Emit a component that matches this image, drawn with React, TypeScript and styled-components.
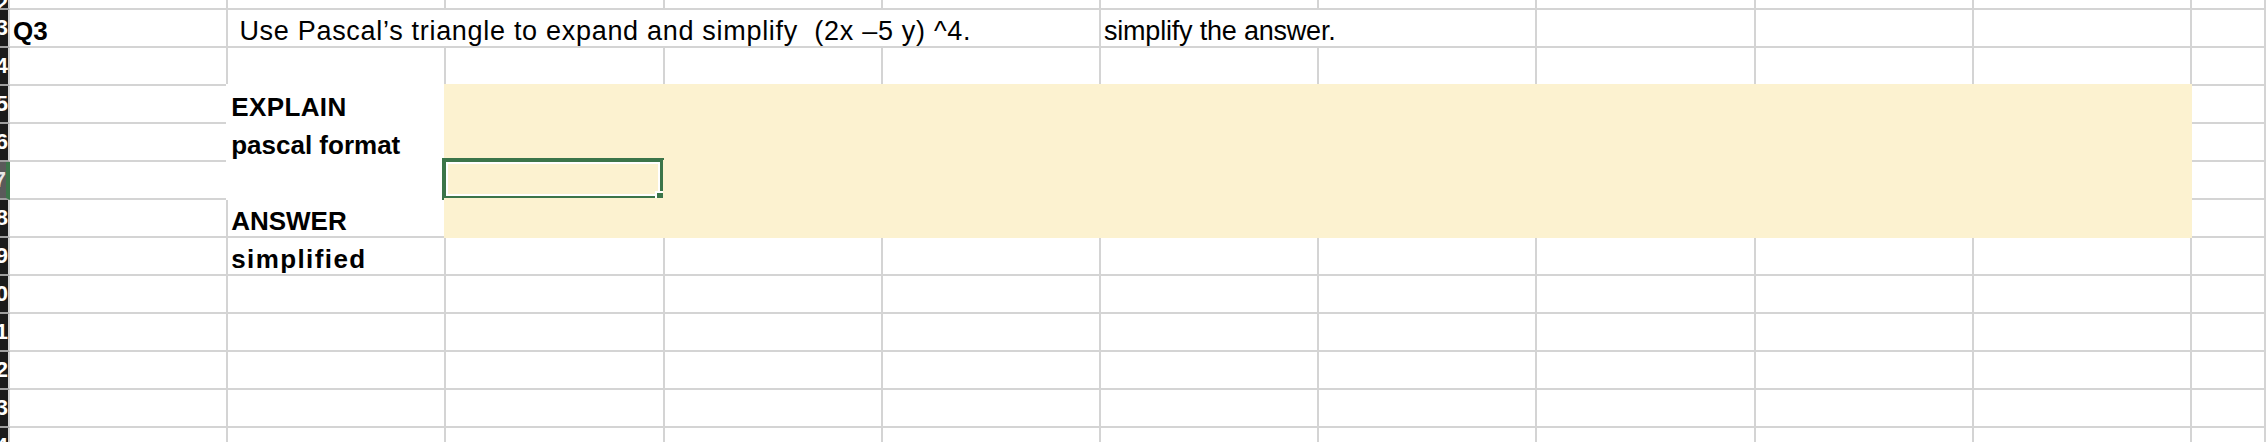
import styled, { createGlobalStyle, css } from "styled-components";

const COL_W = 218.2;
const ROW_H = 38;

const colors = {
  grid: "#d4d4d4",
  header: "#1b1b1b",
  headerSelected: "#5a5a5a",
  headerLine: "#9e9e9e",
  text: "#000000",
  white: "#ffffff",
  yellow: "#fcf2d0",
  select: "#3b7549",
};

const GlobalStyle = createGlobalStyle`
  html, body {
    margin: 0;
    padding: 0;
    background: #fff;
    overflow: hidden;
  }
  body {
    font-family: "Liberation Sans", Arial, Helvetica, sans-serif;
  }
`;

const Sheet = styled.div`
  display: grid;
  grid-template-columns: 10px repeat(10, ${COL_W}px) 1fr;
  grid-template-rows: 10px repeat(12, ${ROW_H}px);
  width: 100vw;
  height: 442px;
  overflow: hidden;
`;

interface RowHeaderProps {
  $row: number;
  $selected?: boolean;
}

const RowHeader = styled.div<RowHeaderProps>`
  grid-row: ${(p) => p.$row};
  grid-column: 1;
  box-sizing: border-box;
  background: ${(p) => (p.$selected ? colors.headerSelected : colors.header)};
  border-bottom: 2px solid ${colors.headerLine};
  border-right: ${(p) =>
    p.$selected ? `4px solid ${colors.select}` : `2px solid ${colors.grid}`};
  display: flex;
  justify-content: flex-end;
  align-items: center;
  overflow: hidden;
  color: ${(p) => (p.$selected ? "#e8e8e8" : "#ffffff")};
  font-size: 22px;
  font-weight: 700;
`;

const RowNumber = styled.span`
  flex-shrink: 0;
`;

interface CellProps {
  $row: number;
  $col: number;
  $span: number;
  $fill?: string;
  $bold?: boolean;
  $tracking?: number;
}

const Cell = styled.div<CellProps>`
  grid-row: ${(p) => p.$row};
  grid-column: ${(p) => p.$col} / span ${(p) => p.$span};
  box-sizing: border-box;
  min-width: 0;
  border-right: 2px solid ${colors.grid};
  border-bottom: 2px solid ${colors.grid};
  background: ${colors.white};
  display: flex;
  align-items: flex-end;
  padding-left: 3px;
  white-space: pre;
  color: ${colors.text};
  font-size: ${(p) => (p.$bold ? 26 : 27)}px;
  line-height: 30px;
  letter-spacing: ${(p) => p.$tracking ?? 0}px;
  font-weight: ${(p) => (p.$bold ? 700 : 400)};

  ${(p) =>
    p.$fill &&
    css`
      position: relative;
      z-index: 1;
      background: ${p.$fill};
      border-color: ${p.$fill};
      margin: -2px 0 0 -2px;
      padding-left: 5px;
    `}
`;

const SelectionFrame = styled.div`
  position: absolute;
  top: -2px;
  left: -2px;
  right: -1px;
  bottom: -2px;
  border: 4px solid ${colors.select};
  box-shadow: inset 0 0 0 2px ${colors.white};
  pointer-events: none;
  z-index: 2;
`;

const FillHandle = styled.div`
  position: absolute;
  right: -8px;
  bottom: -8px;
  width: 11px;
  height: 11px;
  background: ${colors.select};
  border-top: 2px solid ${colors.white};
  border-left: 2px solid ${colors.white};
`;

interface CellDef {
  text?: string;
  bold?: boolean;
  span?: number;
  fill?: string;
  selected?: boolean;
  tracking?: number;
}

const COLUMNS = ["A", "B", "C", "D", "E", "F", "G", "H", "I", "J", "K"];
const FIRST_ROW = 2;
const LAST_ROW = 14;
const SELECTED_ROW = 7;

const content: Record<string, CellDef> = {
  "3A": { text: "Q3", bold: true },
  "3B": {
    text: " Use Pascal’s triangle to expand and simplify  (2x –5 y) ^4.",
    span: 4,
    tracking: 0.7,
  },
  "3F": { text: "simplify the answer.", span: 2, tracking: -0.2 },
  "5B": { text: "EXPLAIN", bold: true, fill: colors.white, tracking: 0.4 },
  "6B": { text: "pascal format", bold: true, fill: colors.white },
  "7B": { fill: colors.white },
  "7C": { fill: colors.yellow, selected: true },
  "8B": { text: "ANSWER", bold: true },
  "9B": { text: "simplified", bold: true, tracking: 1.4 },
};

// C5:J8 has the light yellow fill
const isYellow = (row: number, colIdx: number) =>
  row >= 5 && row <= 8 && colIdx >= 2 && colIdx <= 9;

const buildRow = (row: number) => {
  const gridRow = row - FIRST_ROW + 1;
  const cells = [];
  let colIdx = 0;
  while (colIdx < COLUMNS.length) {
    const key = `${row}${COLUMNS[colIdx]}`;
    const def: CellDef = content[key] ?? {};
    const span = def.span ?? 1;
    const fill = def.fill ?? (isYellow(row, colIdx) ? colors.yellow : undefined);
    cells.push(
      <Cell
        key={key}
        $row={gridRow}
        $col={colIdx + 2}
        $span={span}
        $fill={fill}
        $bold={def.bold}
        $tracking={def.tracking}
      >
        {def.text}
        {def.selected && (
          <SelectionFrame>
            <FillHandle />
          </SelectionFrame>
        )}
      </Cell>
    );
    colIdx += span;
  }
  return cells;
};

const App = () => {
  const rows = [];
  for (let r = FIRST_ROW; r <= LAST_ROW; r++) rows.push(r);

  return (
    <>
      <GlobalStyle />
      <Sheet>
        {rows.map((r) => (
          <RowHeader
            key={`h${r}`}
            $row={r - FIRST_ROW + 1}
            $selected={r === SELECTED_ROW}
          >
            <RowNumber>{r}</RowNumber>
          </RowHeader>
        ))}
        {rows.map((r) => buildRow(r))}
      </Sheet>
    </>
  );
};

export default App;
